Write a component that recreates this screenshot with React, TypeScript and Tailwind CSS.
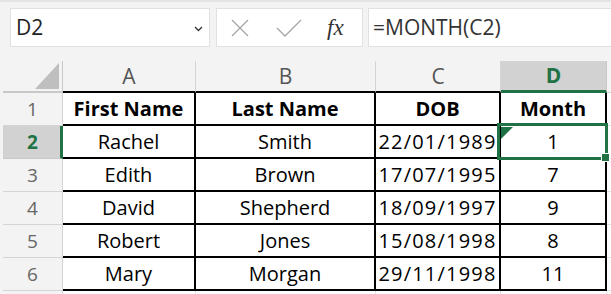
import React from 'react'

const rows = [
  ['Rachel', 'Smith', '22/01/1989', '1'],
  ['Edith', 'Brown', '17/07/1995', '7'],
  ['David', 'Shepherd', '18/09/1997', '9'],
  ['Robert', 'Jones', '15/08/1998', '8'],
  ['Mary', 'Morgan', '29/11/1998', '11'],
]

const widths = ['w-[133px]', 'w-[180px]', 'w-[125px]', 'w-[106px]']

function Cell({ w, children, bold, date }: { w: string; children: React.ReactNode; bold?: boolean; date?: boolean }) {
  return (
    <div
      className={`${w} shrink-0 bg-white border-r-2 border-b-2 border-black flex items-center justify-center text-[20px] text-black pt-[1px] ${
        bold ? 'font-bold' : ''
      } ${date ? 'tracking-[1.2px]' : ''}`}
    >
      {children}
    </div>
  )
}

export default function App() {
  return (
    <div className="w-[611px] h-[294px] overflow-hidden bg-[#f3f3f3] font-['Open_Sans',sans-serif] leading-none">
      <div className="h-[2px] bg-[#e4e4e4]" />

      {/* formula bar */}
      <div className="h-[59px] flex items-start pt-[6px] pl-[10px]">
        <div className="w-[200px] h-[39px] bg-white border border-[#e1e1e1] flex items-center justify-between pl-[5px] pr-[6px]">
          <span className="text-[21px] text-[#222]">D2</span>
          <svg width="9" height="6" viewBox="0 0 9 6" className="mt-[2px]">
            <polyline points="1,1 4.5,4.5 8,1" fill="none" stroke="#333" strokeWidth="1.3" />
          </svg>
        </div>
        <div className="ml-[6px] w-[147px] h-[39px] bg-white border border-[#e1e1e1] flex items-center">
          <svg width="18" height="18" viewBox="0 0 18 18" className="ml-[14px]">
            <path d="M1 1 L17 17 M17 1 L1 17" stroke="#a6a6a6" strokeWidth="1.3" fill="none" />
          </svg>
          <svg width="26" height="18" viewBox="0 0 26 18" className="ml-[27px]">
            <polyline points="1,9 9,17 25,1" stroke="#a6a6a6" strokeWidth="1.3" fill="none" />
          </svg>
          <span className="ml-[25px] text-[23px] italic text-[#333] font-['Liberation_Serif',serif]">fx</span>
        </div>
        <div className="ml-[5px] flex-1 h-[39px] bg-white border border-r-0 border-[#e1e1e1] flex items-center pl-[4px]">
          <span className="text-[21px] text-[#333]">=MONTH(C2)</span>
        </div>
      </div>

      {/* sheet */}
      <div className="pl-[3px]">
        {/* column headers */}
        <div className="flex h-[32px]">
          <div className="relative w-[60px] shrink-0 border-r border-b-2 border-[#c8c8c8]">
            <svg width="24" height="26" viewBox="0 0 24 26" className="absolute right-[3px] bottom-[2px]">
              <polygon points="24,0 24,26 0,26" fill="#bfbfbf" />
            </svg>
          </div>
          {['A', 'B', 'C'].map((c, i) => (
            <div
              key={c}
              className={`${widths[i]} shrink-0 border-r border-[#d4d4d4] border-b-2 border-b-black flex items-center justify-center text-[21px] text-[#555]`}
            >
              {c}
            </div>
          ))}
          <div className="w-[106px] shrink-0 bg-[#d2d2d2] border-r border-[#c8c8c8] border-b-[3px] border-b-[#217346] flex items-center justify-center text-[21px] font-bold text-[#217346]">
            D
          </div>
          <div className="flex-1 border-b border-[#d4d4d4]" />
        </div>

        {/* row 1 headings */}
        <div className="flex h-[33px]">
          <div className="w-[60px] shrink-0 border-r border-b border-[#d4d4d4] flex items-center justify-center text-[19px] text-[#666]">
            1
          </div>
          <Cell w={widths[0]} bold>First Name</Cell>
          <Cell w={widths[1]} bold>Last Name</Cell>
          <Cell w={widths[2]} bold>DOB</Cell>
          <Cell w={widths[3]} bold>Month</Cell>
          <div className="flex-1 bg-white border-b border-[#e1e1e1]" />
        </div>

        {rows.map((r, i) => {
          const selected = i === 0
          return (
            <div key={i} className="flex h-[33px]">
              <div
                className={`w-[60px] shrink-0 border-b flex items-center justify-center text-[19px] ${
                  selected
                    ? 'bg-[#d2d2d2] border-b-[#c8c8c8] border-r-[3px] border-r-[#217346] font-bold text-[#217346] pl-[2px]'
                    : 'border-r border-[#d4d4d4] text-[#666]'
                }`}
              >
                {i + 2}
              </div>
              <Cell w={widths[0]}>{r[0]}</Cell>
              <Cell w={widths[1]}>{r[1]}</Cell>
              <Cell w={widths[2]} date>{r[2]}</Cell>
              {selected ? (
                <div className="relative w-[106px] shrink-0 bg-white border-r-2 border-b-2 border-black flex items-center justify-center text-[20px] text-black pt-[1px]">
                  <svg width="12" height="12" viewBox="0 0 12 12" className="absolute left-0 top-[1px]">
                    <polygon points="0,0 12,0 0,12" fill="#1e7145" />
                  </svg>
                  {r[3]}
                  <div className="absolute left-[-4px] top-[-3px] w-[111px] h-[37px] border-[3px] border-[#217346] z-10" />
                  <div className="absolute left-[100px] top-[27px] w-[9px] h-[9px] bg-[#217346] border border-white z-20" />
                </div>
              ) : (
                <Cell w={widths[3]}>{r[3]}</Cell>
              )}
              <div className="flex-1 bg-white border-b border-[#e1e1e1]" />
            </div>
          )
        })}

        {/* row 7 partial */}
        <div className="flex h-[10px]">
          <div className="w-[60px] shrink-0 border-r border-[#d4d4d4]" />
          <div className="w-[133px] shrink-0 bg-white border-r border-[#e1e1e1]" />
          <div className="w-[180px] shrink-0 bg-white border-r border-[#e1e1e1]" />
          <div className="w-[125px] shrink-0 bg-white border-r border-[#e1e1e1]" />
          <div className="w-[106px] shrink-0 bg-white border-r border-[#e1e1e1]" />
          <div className="flex-1 bg-white" />
        </div>
      </div>
    </div>
  )
}
